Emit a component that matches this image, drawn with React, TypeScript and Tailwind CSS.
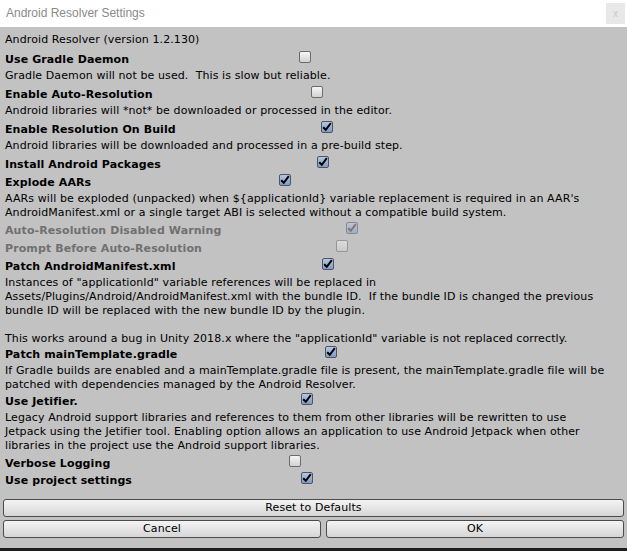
import React from 'react'

type Setting = {
  label: string
  checked: boolean
  disabled?: boolean
  labelWidth: string
  spacing: string
  description?: string[]
}

const settings: Setting[] = [
  {
    label: 'Use Gradle Daemon',
    checked: false,
    labelWidth: 'w-[294px]',
    spacing: 'mb-[4px]',
    description: ['Gradle Daemon will not be used.  This is slow but reliable.'],
  },
  {
    label: 'Enable Auto-Resolution',
    checked: false,
    labelWidth: 'w-[306px]',
    spacing: 'mb-[4px]',
    description: [
      'Android libraries will *not* be downloaded or processed in the editor.',
    ],
  },
  {
    label: 'Enable Resolution On Build',
    checked: true,
    labelWidth: 'w-[316px]',
    spacing: 'mb-[4px]',
    description: [
      'Android libraries will be downloaded and processed in a pre-build step.',
    ],
  },
  {
    label: 'Install Android Packages',
    checked: true,
    labelWidth: 'w-[312px]',
    spacing: 'mb-[1px]',
  },
  {
    label: 'Explode AARs',
    checked: true,
    labelWidth: 'w-[274px]',
    spacing: 'mb-[3px]',
    description: [
      "AARs will be exploded (unpacked) when ${applicationId} variable replacement is required in an AAR's",
      'AndroidManifest.xml or a single target ABI is selected without a compatible build system.',
    ],
  },
  {
    label: 'Auto-Resolution Disabled Warning',
    checked: true,
    disabled: true,
    labelWidth: 'w-[341px]',
    spacing: 'mb-[1px]',
  },
  {
    label: 'Prompt Before Auto-Resolution',
    checked: false,
    disabled: true,
    labelWidth: 'w-[331px]',
    spacing: 'mb-[1px]',
  },
  {
    label: 'Patch AndroidManifest.xml',
    checked: true,
    labelWidth: 'w-[317px]',
    spacing: 'mb-[1px]',
    description: [
      'Instances of "applicationId" variable references will be replaced in',
      'Assets/Plugins/Android/AndroidManifest.xml with the bundle ID.  If the bundle ID is changed the previous',
      'bundle ID will be replaced with the new bundle ID by the plugin.',
      '',
      'This works around a bug in Unity 2018.x where the "applicationId" variable is not replaced correctly.',
    ],
  },
  {
    label: 'Patch mainTemplate.gradle',
    checked: true,
    labelWidth: 'w-[320px]',
    spacing: 'mb-[2px]',
    description: [
      'If Gradle builds are enabled and a mainTemplate.gradle file is present, the mainTemplate.gradle file will be',
      'patched with dependencies managed by the Android Resolver.',
    ],
  },
  {
    label: 'Use Jetifier.',
    checked: true,
    labelWidth: 'w-[296px]',
    spacing: 'mb-[3px]',
    description: [
      'Legacy Android support libraries and references to them from other libraries will be rewritten to use',
      'Jetpack using the Jetifier tool. Enabling option allows an application to use Android Jetpack when other',
      'libraries in the project use the Android support libraries.',
    ],
  },
  {
    label: 'Verbose Logging',
    checked: false,
    labelWidth: 'w-[284px]',
    spacing: 'mb-0',
  },
  {
    label: 'Use project settings',
    checked: true,
    labelWidth: 'w-[296px]',
    spacing: 'mb-0',
  },
]

const Toggle = ({ checked, disabled }: { checked: boolean; disabled?: boolean }) => (
  <span
    className={[
      'flex h-[12px] w-[12px] shrink-0 items-center justify-center rounded-[2px] border',
      checked
        ? 'border-[#4f5560] bg-gradient-to-b from-[#b4c6e2] to-[#7f9bc6]'
        : 'border-[#6b6b6b] bg-gradient-to-b from-[#f6f6f6] to-[#d2d2d2]',
      disabled ? 'opacity-50' : '',
    ].join(' ')}
  >
    {checked && (
      <svg width="10" height="10" viewBox="0 0 10 10">
        <path
          d="M1.2 5.2 L3.8 7.8 L8.8 1.2"
          fill="none"
          stroke={disabled ? '#333' : '#000'}
          strokeWidth="2"
        />
      </svg>
    )}
  </span>
)

const SettingRow = ({ setting }: { setting: Setting }) => (
  <div className={['flex flex-col', setting.spacing].join(' ')}>
    <div className="flex h-[17px] items-start">
      <span
        className={[
          setting.labelWidth,
          'shrink-0 text-[11px] font-bold leading-[18px]',
          setting.disabled ? 'text-[#707070]' : 'text-black',
        ].join(' ')}
      >
        {setting.label}
      </span>
      <Toggle checked={setting.checked} disabled={setting.disabled} />
    </div>
    {setting.description?.map((line, i) => (
      <div key={i} className="h-[14px] whitespace-pre text-[11px] leading-[15px] text-black">
        {line}
      </div>
    ))}
  </div>
)

const Button = ({ label, className }: { label: string; className: string }) => (
  <button
    className={[
      'h-[18px] rounded-[3px] border border-[#4b4b4b] bg-gradient-to-b from-[#f4f4f4] to-[#d6d6d6] text-[11px] leading-[16px] text-black',
      className,
    ].join(' ')}
  >
    {label}
  </button>
)

export default function App() {
  return (
    <div className="flex h-[551px] w-[627px] flex-col bg-[#c2c2c2] font-['DejaVu_Sans',sans-serif] tracking-[0.1px]">
      <div className="flex h-[27px] shrink-0 items-start justify-between bg-white">
        <span className="pl-[6px] pt-[4px] font-['Liberation_Sans',sans-serif] text-[12px] tracking-normal text-[#8a8a8a]">
          Android Resolver Settings
        </span>
        <span className="mr-[2px] mt-[3px] flex h-[21px] w-[19px] items-center justify-center bg-[#e8e8e8] font-['Liberation_Sans',sans-serif] text-[10px] text-[#c8c8c8]">
          x
        </span>
      </div>

      <div className="flex flex-col pl-[5px] pt-[4px]">
        <div className="mb-[4px] h-[16px] text-[11px] leading-[17px] text-black">
          Android Resolver (version 1.2.130)
        </div>
        <div className="flex flex-col">
          {settings.map((s) => (
            <SettingRow key={s.label} setting={s} />
          ))}
        </div>
      </div>

      <div className="mt-auto flex flex-col gap-[3px] px-[3px]">
        <Button label="Reset to Defaults" className="w-full" />
        <div className="flex gap-[5px]">
          <Button label="Cancel" className="w-[318px]" />
          <Button label="OK" className="flex-1" />
        </div>
      </div>
      <div className="mt-[10px] h-[3px] shrink-0 bg-[#1e1e1e]" />
    </div>
  )
}
